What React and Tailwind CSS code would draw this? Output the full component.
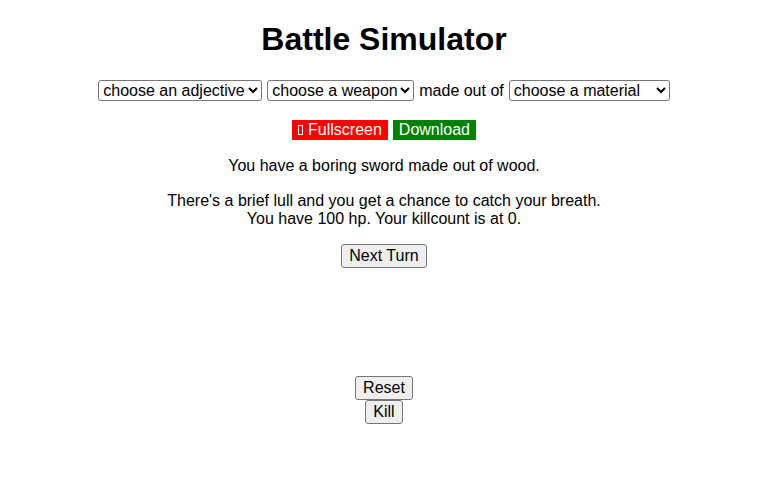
import { useState } from "react";

const adjectives = ["choose an adjective", "boring", "shiny", "rusty", "legendary"];
const weapons = ["choose a weapon", "sword", "axe", "spear", "bow"];
const materials = ["choose a material", "wood", "iron", "steel", "gold"];

function Picker({ options, width }) {
  return (
    <select
      className={`${width} h-[21px] border border-[#767676] rounded-[3px] bg-white text-black p-0 text-[16px] align-middle`}
    >
      {options.map((o) => (
        <option key={o}>{o}</option>
      ))}
    </select>
  );
}

function PlainButton({ children, onClick }) {
  return (
    <button
      onClick={onClick}
      className="h-[24px] px-[7px] border border-[#767676] rounded-[3px] bg-[#efefef] text-black text-[16px] leading-[20px]"
    >
      {children}
    </button>
  );
}

export default function App() {
  const [hp, setHp] = useState(100);
  const [kills, setKills] = useState(0);

  return (
    <div className="min-h-[480px] bg-white text-black text-center font-['Liberation_Sans',Arial,sans-serif] text-[16px] leading-[18px]">
      <h1 className="pt-[21px] text-[32px] leading-[37px] font-bold">Battle Simulator</h1>

      <div className="mt-[22px] flex justify-center items-center gap-[5px] h-[21px]">
        <Picker options={adjectives} width="w-[164px]" />
        <Picker options={weapons} width="w-[147px]" />
        <span>made out of</span>
        <Picker options={materials} width="w-[161px]" />
      </div>

      <div className="mt-[19px] flex justify-center gap-[5px]">
        <button className="h-[20px] px-[6px] bg-[#ff0000] text-white leading-[20px] flex items-center gap-[5px]">
          <span className="inline-block w-[5px] h-[10px] border border-white" />
          Fullscreen
        </button>
        <button className="h-[20px] px-[6px] bg-[#008000] text-white leading-[20px]">Download</button>
      </div>

      <p className="mt-[17px]">You have a boring sword made out of wood.</p>

      <p className="mt-[17px]">
        There's a brief lull and you get a chance to catch your breath.
        <br />
        You have {hp} hp. Your killcount is at {kills}.
      </p>

      <div className="mt-[16px]">
        <PlainButton>Next Turn</PlainButton>
      </div>

      <div className="mt-[108px] flex flex-col items-center">
        <PlainButton
          onClick={() => {
            setHp(100);
            setKills(0);
          }}
        >
          Reset
        </PlainButton>
        <PlainButton onClick={() => setHp(0)}>Kill</PlainButton>
      </div>
    </div>
  );
}
